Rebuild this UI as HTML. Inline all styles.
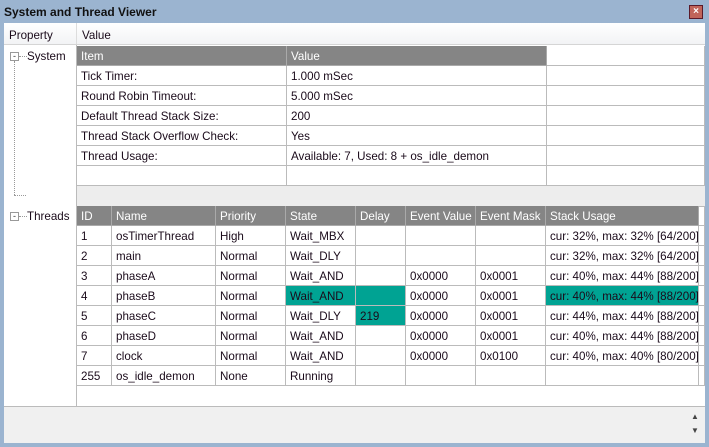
<!DOCTYPE html><html><head><style>
body{margin:0;width:709px;height:447px;overflow:hidden;background:#9bb4d0;font-family:"Liberation Sans",sans-serif;font-size:11.6px;color:#1a0a1a;position:relative}
.a{position:absolute}
.title{left:4px;top:5px;font-weight:bold;color:#111;font-size:12px}
.close{left:689px;top:5px;width:12px;height:12px;background:#c0645a;border:1px solid #5a1a2a;color:#fff;font-size:10px;line-height:12px;text-align:center;font-weight:bold}
.win{left:4px;top:23px;width:701px;height:419px;background:#fff}
.hdr{left:4px;top:23px;width:701px;height:21px;background:linear-gradient(#fff,#f2f3f5);border-bottom:1px solid #d5d5d5}
.c{position:absolute;height:19px;line-height:21px;padding-left:4px;box-sizing:border-box;border-right:1px solid #bbb;border-bottom:1px solid #bbb;white-space:nowrap;overflow:hidden}
.h{background:#858585;color:#fff;border-color:#aaa}
.t{background:#00a393}
</style></head><body>
<div class="a title">System and Thread Viewer</div>
<div class="a close">×</div>
<div class="a win"></div>
<div class="a hdr"></div>
<div class="a" style="left:76px;top:23px;width:1px;height:21px;background:#ddd"></div>
<div class="a" style="left:9px;top:29px">Property</div>
<div class="a" style="left:82px;top:29px">Value</div>
<div class="a" style="left:10px;top:52px;width:9px;height:9px;border:1px solid #999;box-sizing:border-box;font-size:9px;line-height:6px;text-align:center;color:#333">-</div>
<div class="a" style="left:19px;top:56px;width:8px;border-top:1px dotted #999"></div>
<div class="a" style="left:14px;top:61px;height:134px;border-left:1px dotted #999"></div>
<div class="a" style="left:14px;top:195px;width:12px;border-top:1px dotted #999"></div>
<div class="a" style="left:27px;top:50px">System</div>
<div class="a" style="left:10px;top:212px;width:9px;height:9px;border:1px solid #999;box-sizing:border-box;font-size:9px;line-height:6px;text-align:center;color:#333">-</div>
<div class="a" style="left:19px;top:216px;width:8px;border-top:1px dotted #999"></div>
<div class="a" style="left:27px;top:210px">Threads</div>
<div class="a" style="left:76px;top:45px;width:1px;height:362px;background:#bbb"></div>
<div id="s"></div>
<div class="a" style="left:77px;top:186px;width:628px;height:20px;background:#ededed;border-bottom:1px solid #bbb"></div>
<div class="a" style="left:4px;top:406px;width:701px;height:36px;background:#f0f0f0;border-top:1px solid #bbb"></div>
<div class="a" style="left:688px;top:410px;width:14px;height:30px;color:#444;font-size:8px;line-height:14px;text-align:center">▲<br>▼</div>
<div id="g"></div>
<script>
function row(top,cols,vals,cls){var h='';for(var i=0;i<cols.length-1;i++){h+='<div class="c '+(cls[i]||'')+'" style="left:'+cols[i]+'px;top:'+top+'px;width:'+(cols[i+1]-cols[i])+'px;height:20px">'+(vals[i]||'')+'</div>';}return h;}
var s='',sc=[77,287,547,705];
s+=row(46,sc,['Item','Value',''],['h','h','']);
var sv=[['Tick Timer:','1.000 mSec'],['Round Robin Timeout:','5.000 mSec'],['Default Thread Stack Size:','200'],['Thread Stack Overflow Check:','Yes'],['Thread Usage:','Available: 7, Used: 8 + os_idle_demon'],['','']];
sv.forEach(function(r,i){s+=row(66+i*20,sc,r.concat(['']),[])});
document.getElementById('s').innerHTML=s;
var g='',tc=[77,112,216,286,356,406,476,546,699,705];
g+=row(206,tc,['ID','Name','Priority','State','Delay','Event Value','Event Mask','Stack Usage',''],['h','h','h','h','h','h','h','h','']);
var tv=[['1','osTimerThread','High','Wait_MBX','','','','cur: 32%, max: 32% [64/200]'],['2','main','Normal','Wait_DLY','','','','cur: 32%, max: 32% [64/200]'],['3','phaseA','Normal','Wait_AND','','0x0000','0x0001','cur: 40%, max: 44% [88/200]'],['4','phaseB','Normal','Wait_AND','','0x0000','0x0001','cur: 40%, max: 44% [88/200]'],['5','phaseC','Normal','Wait_DLY','219','0x0000','0x0001','cur: 44%, max: 44% [88/200]'],['6','phaseD','Normal','Wait_AND','','0x0000','0x0001','cur: 40%, max: 44% [88/200]'],['7','clock','Normal','Wait_AND','','0x0000','0x0100','cur: 40%, max: 40% [80/200]'],['255','os_idle_demon','None','Running','','','','']];
tv.forEach(function(r,i){var cl=[];if(i==3){cl[3]='t';cl[4]='t';cl[7]='t';}if(i==4)cl[4]='t';g+=row(226+i*20,tc,r.concat(['']),cl)});
document.getElementById('g').innerHTML=g;
</script>
</body></html>
